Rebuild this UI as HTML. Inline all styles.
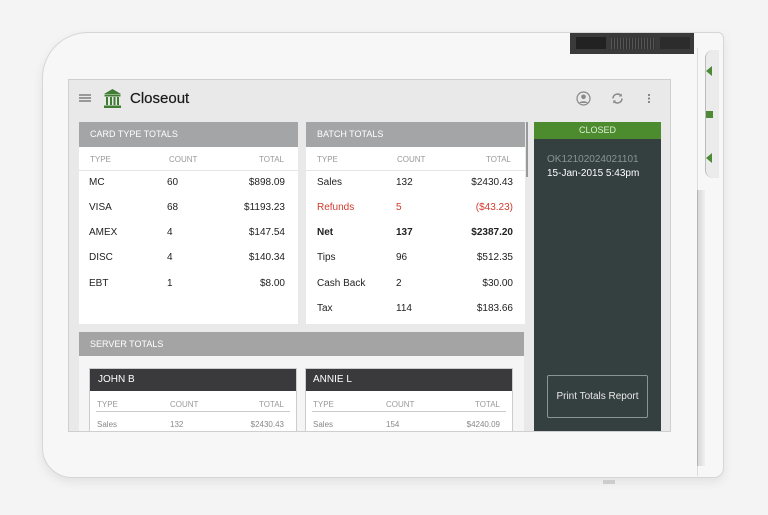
<!DOCTYPE html>
<html><head><meta charset="utf-8"><style>
*{box-sizing:border-box;margin:0;padding:0}
body{width:768px;height:515px;background:#f4f4f4;font-family:"Liberation Sans",sans-serif;position:relative;overflow:hidden}
.abs{position:absolute}
.dev{left:42px;top:32px;width:682px;height:446px;background:#f7f7f7;border:1.5px solid #d6d6d6;border-radius:46px 6px 10px 30px;box-shadow:0 4px 10px rgba(0,0,0,.08)}
.screen{left:68px;top:79px;width:603px;height:353px;background:#e9e9e9;border:1px solid #cfcfcf;overflow:hidden}
.card{background:#fff}
.hd{background:#a3a5a6;color:#fff;font-size:9px;height:25px;line-height:25px;padding-left:11px}
.row{position:absolute;left:0;right:0;font-size:10px;color:#222}
.row span{position:absolute}
.ch{font-size:8px;color:#999}
</style></head><body>
<div class="abs dev"></div>
<div class="abs" style="left:570px;top:33px;width:124px;height:21px;background:#3a3a3a"></div>
<div class="abs" style="left:576px;top:37px;width:30px;height:12px;background:#222"></div>
<div class="abs" style="left:611px;top:38px;width:44px;height:11px;background:repeating-linear-gradient(90deg,#555 0 1px,#333 1px 3px)"></div>
<div class="abs" style="left:660px;top:37px;width:30px;height:12px;background:#2c2c2c"></div>
<div class="abs" style="left:697px;top:48px;width:1px;height:428px;background:#ddd"></div>
<div class="abs" style="left:705px;top:50px;width:14px;height:128px;background:#ebebeb;border-left:1px solid #bbb;border-radius:8px 0 0 8px"></div>
<div class="abs" style="left:706px;top:66px;width:0;height:0;border:5px solid transparent;border-right:6px solid #4c8a36;border-left:0"></div>
<div class="abs" style="left:706px;top:111px;width:7px;height:7px;background:#4c8a36"></div>
<div class="abs" style="left:706px;top:153px;width:0;height:0;border:5px solid transparent;border-right:6px solid #4c8a36;border-left:0"></div>
<div class="abs" style="left:697px;top:190px;width:8px;height:276px;background:linear-gradient(90deg,#d8d8d8,#f0f0f0);border-left:1px solid #b5b5b5"></div>
<div class="abs" style="left:603px;top:480px;width:12px;height:4px;background:#ccc"></div>

<div class="abs screen">
 <div class="abs" style="left:10px;top:14px;width:12px;height:1.5px;background:#999;box-shadow:0 3px 0 #999,0 6px 0 #999"></div>
 <svg class="abs" style="left:34px;top:8px" width="19" height="21" viewBox="0 0 19 21"><path d="M9.5 1L1 6h17z" fill="#3e7d32"/><rect x="1.5" y="6.5" width="16" height="2" fill="#3e7d32"/><rect x="3" y="9" width="2" height="8" fill="#3e7d32"/><rect x="7" y="9" width="2" height="8" fill="#3e7d32"/><rect x="10.5" y="9" width="2" height="8" fill="#3e7d32"/><rect x="14" y="9" width="2" height="8" fill="#3e7d32"/><rect x="1" y="17.5" width="17" height="2.5" fill="#3e7d32"/></svg>
 <div class="abs" style="left:61px;top:10px;font-size:15px;color:#1a1a1a;-webkit-text-stroke:0.2px #1a1a1a">Closeout</div>
 <svg class="abs" style="left:507px;top:11px" width="15" height="15" viewBox="0 0 15 15"><circle cx="7.5" cy="7.5" r="6.5" fill="none" stroke="#888" stroke-width="1.2"/><circle cx="7.5" cy="5.8" r="2.3" fill="#888"/><path d="M3.3 12c1-2.3 7.4-2.3 8.4 0" fill="#888"/></svg>
 <svg class="abs" style="left:542px;top:12px" width="13" height="13" viewBox="0 0 13 13"><path d="M2 6.5a4.5 4.5 0 0 1 8-2.8M11 6.5a4.5 4.5 0 0 1-8 2.8" fill="none" stroke="#888" stroke-width="1.5"/><path d="M10.8 1.5v3h-3z M2.2 11.5v-3h3z" fill="#888"/></svg>
 <div class="abs" style="left:579px;top:14px;width:2px;height:2px;background:#888;box-shadow:0 3.5px 0 #888,0 7px 0 #888"></div>

 <div class="abs card" style="left:10px;top:42px;width:219px;height:202px">
  <div class="hd">CARD TYPE TOTALS</div>
  <div class="row ch" style="top:33px"><span style="left:11px">TYPE</span><span style="left:90px">COUNT</span><span style="right:14px">TOTAL</span></div>
  <div class="abs" style="left:0;right:0;top:48px;height:1px;background:#e4e4e4"></div>
  <div class="row" style="top:55px"><span style="left:10px">MC</span><span style="left:88px">60</span><span style="right:13px">$898.09</span></div>
  <div class="row" style="top:80px"><span style="left:10px">VISA</span><span style="left:88px">68</span><span style="right:13px">$1193.23</span></div>
  <div class="row" style="top:105px"><span style="left:10px">AMEX</span><span style="left:88px">4</span><span style="right:13px">$147.54</span></div>
  <div class="row" style="top:130px"><span style="left:10px">DISC</span><span style="left:88px">4</span><span style="right:13px">$140.34</span></div>
  <div class="row" style="top:156px"><span style="left:10px">EBT</span><span style="left:88px">1</span><span style="right:13px">$8.00</span></div>
 </div>

 <div class="abs card" style="left:237px;top:42px;width:219px;height:202px">
  <div class="hd">BATCH TOTALS</div>
  <div class="row ch" style="top:33px"><span style="left:11px">TYPE</span><span style="left:91px">COUNT</span><span style="right:14px">TOTAL</span></div>
  <div class="abs" style="left:0;right:0;top:48px;height:1px;background:#e4e4e4"></div>
  <div class="row" style="top:55px"><span style="left:11px">Sales</span><span style="left:90px">132</span><span style="right:12px">$2430.43</span></div>
  <div class="row" style="top:80px;color:#d23a2c"><span style="left:11px">Refunds</span><span style="left:90px">5</span><span style="right:12px">($43.23)</span></div>
  <div class="row" style="top:105px;font-weight:bold"><span style="left:11px">Net</span><span style="left:90px">137</span><span style="right:12px">$2387.20</span></div>
  <div class="row" style="top:130px"><span style="left:11px">Tips</span><span style="left:90px">96</span><span style="right:12px">$512.35</span></div>
  <div class="row" style="top:156px"><span style="left:11px">Cash Back</span><span style="left:90px">2</span><span style="right:12px">$30.00</span></div>
  <div class="row" style="top:181px"><span style="left:11px">Tax</span><span style="left:90px">114</span><span style="right:12px">$183.66</span></div>
 </div>
 <div class="abs" style="left:457px;top:42px;width:2px;height:55px;background:#999"></div>

 <div class="abs" style="left:465px;top:42px;width:127px;height:311px;background:#343f40">
  <div style="background:#4c8b2e;color:#dfeed6;font-size:9px;height:17px;line-height:17px;text-align:center">CLOSED</div>
  <div class="abs" style="left:13px;top:32px;font-size:10px;color:#8a9495">OK12102024021101</div>
  <div class="abs" style="left:13px;top:46px;font-size:10px;color:#fff">15-Jan-2015 5:43pm</div>
  <div class="abs" style="left:13px;top:253px;width:101px;height:43px;border:1px solid #8a9495;border-radius:2px;color:#e8e8e8;font-size:10px;line-height:41px;text-align:center">Print Totals Report</div>
 </div>

 <div class="abs" style="left:10px;top:252px;width:445px;height:110px;background:#f5f5f5">
  <div class="hd" style="height:24px;line-height:24px;background:#a4a4a4">SERVER TOTALS</div>
  <div class="abs card" style="left:10px;top:36px;width:208px;height:80px;border:1px solid #ccc">
   <div style="background:#3a3a3c;color:#fff;font-size:10px;height:22px;line-height:22px;padding-left:8px">JOHN B</div>
   <div class="row ch" style="top:31px"><span style="left:7px">TYPE</span><span style="left:80px">COUNT</span><span style="right:12px">TOTAL</span></div>
   <div class="abs" style="left:6px;right:6px;top:42px;height:1px;background:#ccc"></div>
   <div class="row ch" style="top:51px;color:#888"><span style="left:7px">Sales</span><span style="left:80px">132</span><span style="right:12px">$2430.43</span></div>
  </div>
  <div class="abs card" style="left:226px;top:36px;width:208px;height:80px;border:1px solid #ccc">
   <div style="background:#3a3a3c;color:#fff;font-size:10px;height:22px;line-height:22px;padding-left:7px">ANNIE L</div>
   <div class="row ch" style="top:31px"><span style="left:7px">TYPE</span><span style="left:80px">COUNT</span><span style="right:12px">TOTAL</span></div>
   <div class="abs" style="left:6px;right:6px;top:42px;height:1px;background:#ccc"></div>
   <div class="row ch" style="top:51px;color:#888"><span style="left:7px">Sales</span><span style="left:80px">154</span><span style="right:12px">$4240.09</span></div>
  </div>
 </div>
</div>
</body></html>
